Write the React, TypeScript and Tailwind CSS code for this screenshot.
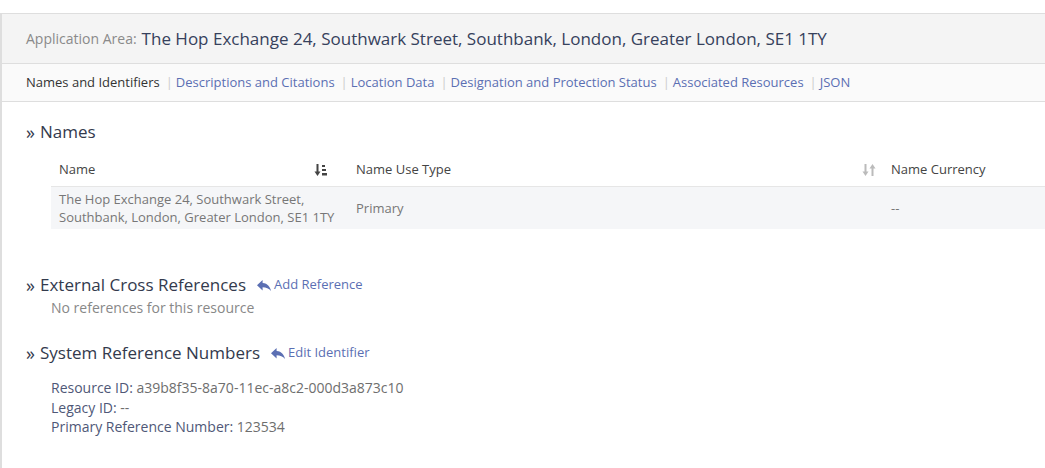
import React from "react";

const font = { fontFamily: '"Open Sans", "Liberation Sans", sans-serif' };

const SortDownIcon = () => (
  <svg width="16" height="14" viewBox="0 0 16 14" className="text-[#444]">
    <rect x="2.5" y="1" width="2" height="9" fill="currentColor" />
    <path d="M0.5 8.5h6L3.5 13z" fill="currentColor" />
    <rect x="8" y="2" width="3" height="2" fill="currentColor" />
    <rect x="8" y="6" width="4" height="2" fill="currentColor" />
    <rect x="8" y="10" width="5" height="2.5" fill="currentColor" />
  </svg>
);

const SortBothIcon = () => (
  <svg width="14" height="14" viewBox="0 0 14 14" className="text-[#bbb]">
    <rect x="2.5" y="1" width="2" height="9" fill="currentColor" />
    <path d="M0.5 8.5h6L3.5 13z" fill="currentColor" />
    <rect x="9.5" y="4" width="2" height="9" fill="currentColor" />
    <path d="M7.5 5.5h6L10.5 1z" fill="currentColor" />
  </svg>
);

const ReplyIcon = () => (
  <svg width="14" height="13" viewBox="2 4 20 16" className="text-[#5b6fb3]">
    <path d="M10 8.5V4l-8 7.5 8 7.5v-4.6c5 0 9 1.6 12 5.6-1-5.5-4.5-11-12-11.5z" fill="currentColor" />
  </svg>
);

const tabs = [
  "Descriptions and Citations",
  "Location Data",
  "Designation and Protection Status",
  "Associated Resources",
  "JSON",
];

const Heading = ({ title, link }: { title: string; link?: string }) => (
  <div className="flex items-center h-6">
    <span className="text-[18px] text-[#333a4d] w-[14px]">»</span>
    <span className="text-[17px] text-[#333a4d]">{title}</span>
    {link && (
      <span className="flex items-center ml-[11px] text-[13px] text-[#5b6fb3]">
        <ReplyIcon />
        <span className="ml-[3px]">{link}</span>
      </span>
    )}
  </div>
);

export default function App() {
  return (
    <div className="bg-white h-screen pt-[13px] overflow-hidden" style={font}>
      <div className="border-l-2 border-t border-[#dedede] h-full">
        <div className="h-[50px] bg-[#f4f4f4] border-b border-[#dedede] flex items-center px-[24px]">
          <span className="text-[14px] text-[#8a8a8a] mr-[5px]">Application Area:</span>
          <span className="text-[17px] text-[#36415c]">
            The Hop Exchange 24, Southwark Street, Southbank, London, Greater London, SE1 1TY
          </span>
        </div>
        <div className="h-[38px] bg-[#fafafa] border-b border-[#dedede] flex items-center px-[24px] text-[13px]">
          <span className="text-[#333]">Names and Identifiers</span>
          {tabs.map((t) => (
            <span key={t} className="flex items-center">
              <span className="text-[#ccc] ml-[6px] mr-[3px]">|</span>
              <span className="text-[#5b6fb3]">{t}</span>
            </span>
          ))}
        </div>
        <div className="pl-[24px]">
          <div className="mt-[18px]">
            <Heading title="Names" />
          </div>
          <div className="ml-[25px] mt-[9px] text-[13px]">
            <div className="flex h-[34px] items-center border-b border-[#e6e6e6] text-[#444]">
              <div className="w-[296px] pl-[8px] pr-[17px] flex items-center justify-between">
                <span>Name</span>
                <SortDownIcon />
              </div>
              <div className="w-[535px] pl-[9px] pr-[6px] flex items-center justify-between">
                <span>Name Use Type</span>
                <SortBothIcon />
              </div>
              <div className="flex-1 pl-[9px]">Name Currency</div>
            </div>
            <div className="flex h-[42px] items-center bg-[#f5f6f8] text-[#777] leading-[18px]">
              <div className="w-[296px] pl-[8px] pr-[4px]">
                The Hop Exchange 24, Southwark Street, Southbank, London, Greater London, SE1 1TY
              </div>
              <div className="w-[535px] pl-[9px]">Primary</div>
              <div className="flex-1 pl-[9px]">--</div>
            </div>
          </div>
          <div className="mt-[44px]">
            <Heading title="External Cross References" link="Add Reference" />
          </div>
          <div className="ml-[25px] mt-[1px] text-[14px] leading-[20px] text-[#888]">
            No references for this resource
          </div>
          <div className="mt-[23px]">
            <Heading title="System Reference Numbers" link="Edit Identifier" />
          </div>
          <div className="ml-[25px] mt-[13px] text-[14px] leading-[19.5px]">
            <div>
              <span className="text-[#4f5877]">Resource ID: </span>
              <span className="text-[#6e6e6e]">a39b8f35-8a70-11ec-a8c2-000d3a873c10</span>
            </div>
            <div>
              <span className="text-[#4f5877]">Legacy ID: </span>
              <span className="text-[#6e6e6e]">--</span>
            </div>
            <div>
              <span className="text-[#4f5877]">Primary Reference Number: </span>
              <span className="text-[#6e6e6e]">123534</span>
            </div>
          </div>
        </div>
      </div>
    </div>
  );
}
